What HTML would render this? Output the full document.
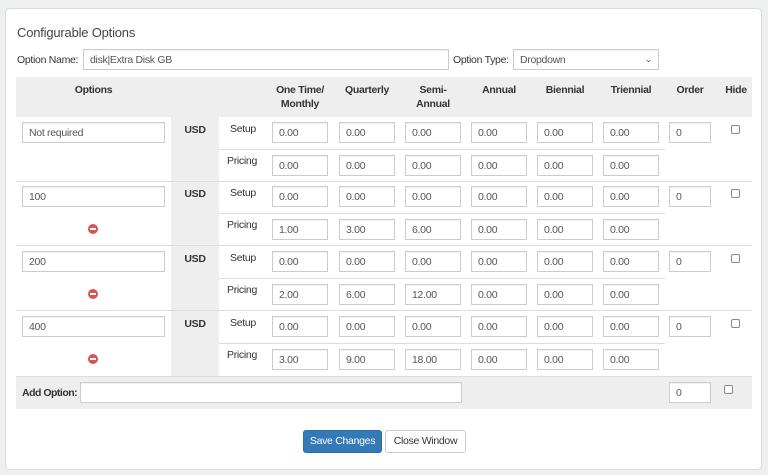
<!DOCTYPE html>
<html><head><meta charset="utf-8"><style>
*{box-sizing:border-box;margin:0;padding:0}
body{width:768px;height:475px;background:#eef0f0;font-family:"Liberation Sans",sans-serif;font-size:10.5px;letter-spacing:-0.3px;color:#333;position:relative;overflow:hidden}
.panel{position:absolute;left:5px;top:8px;width:757px;height:462px;background:#fff;border:1px solid #dcdcdc;border-radius:5px}
.a{position:absolute}
.in{position:absolute;height:21px;border:1px solid #ccc;background:#fff;color:#555;padding:1px 0 0 6px;line-height:19px;font-size:10.5px;box-shadow:inset 0 1px 1px rgba(0,0,0,.06)}
.h{position:absolute;font-weight:bold;text-align:center;line-height:14px;color:#333}
.grey{background:#eee}
.cb{position:absolute;width:9px;height:9px;border:1px solid #888;border-radius:2px;background:#fff}
.minus{position:absolute;width:10px;height:10px;border-radius:50%;background:#d9534f;}
.minus:after{content:"";position:absolute;left:2px;top:4px;width:6px;height:2px;background:#fff}
.blk{position:absolute;left:16px;width:736px;height:65px;border-bottom:1px solid #ddd}
.lbl{position:absolute}
</style></head><body>
<div class="panel"></div>
<div class="a" style="left:17px;top:25px;font-size:13px;color:#444;letter-spacing:-0.2px">Configurable Options</div>
<div class="a" style="left:17px;top:54px">Option Name:</div>
<div class="in" style="left:83px;top:49px;width:366px">disk|Extra Disk GB</div>
<div class="a" style="left:453px;top:54px">Option Type:</div>
<div class="in" style="left:513px;top:49px;width:146px">Dropdown<span style="position:absolute;right:6px;top:0;font-size:9px">&#8964;</span></div>
<div class="a grey" style="left:16px;top:77px;width:736px;height:40px"></div>
<div class="h" style="left:16px;top:83px;width:155px">Options</div>
<div class="h" style="left:268px;top:83px;width:64px">One Time/<br>Monthly</div>
<div class="h" style="left:335px;top:83px;width:64px">Quarterly</div>
<div class="h" style="left:401px;top:83px;width:64px">Semi-<br>Annual</div>
<div class="h" style="left:467px;top:83px;width:64px">Annual</div>
<div class="h" style="left:533px;top:83px;width:64px">Biennial</div>
<div class="h" style="left:599px;top:83px;width:64px">Triennial</div>
<div class="h" style="left:669px;top:83px;width:42px">Order</div>
<div class="h" style="left:722px;top:83px;width:28px">Hide</div>

<div class="a grey" style="left:171px;top:117px;width:48px;height:259px"></div>

<div class="blk" style="top:117px">
<div class="a" style="left:203px;top:32px;width:446px;border-top:1px solid #ddd"></div>
<div class="in" style="left:6px;top:5px;width:143px">Not required</div>
<div class="h" style="left:155px;top:6px;width:48px">USD</div>
<div class="lbl" style="left:214px;top:6px">Setup</div>
<div class="lbl" style="left:211px;top:38px">Pricing</div>
<div class="in" style="left:256px;top:5px;width:56px">0.00</div><div class="in" style="left:323px;top:5px;width:56px">0.00</div><div class="in" style="left:389px;top:5px;width:56px">0.00</div><div class="in" style="left:455px;top:5px;width:56px">0.00</div><div class="in" style="left:521px;top:5px;width:56px">0.00</div><div class="in" style="left:587px;top:5px;width:56px">0.00</div>
<div class="in" style="left:256px;top:38px;width:56px">0.00</div><div class="in" style="left:323px;top:38px;width:56px">0.00</div><div class="in" style="left:389px;top:38px;width:56px">0.00</div><div class="in" style="left:455px;top:38px;width:56px">0.00</div><div class="in" style="left:521px;top:38px;width:56px">0.00</div><div class="in" style="left:587px;top:38px;width:56px">0.00</div>
<div class="in" style="left:653px;top:5px;width:42px">0</div>
<div class="cb" style="left:715px;top:8px"></div>
</div>

<div class="blk" style="top:181px">
<div class="a" style="left:203px;top:32px;width:446px;border-top:1px solid #ddd"></div>
<div class="in" style="left:6px;top:5px;width:143px">100</div>
<div class="minus" style="left:72px;top:43px"></div>
<div class="h" style="left:155px;top:6px;width:48px">USD</div>
<div class="lbl" style="left:214px;top:6px">Setup</div>
<div class="lbl" style="left:211px;top:38px">Pricing</div>
<div class="in" style="left:256px;top:5px;width:56px">0.00</div><div class="in" style="left:323px;top:5px;width:56px">0.00</div><div class="in" style="left:389px;top:5px;width:56px">0.00</div><div class="in" style="left:455px;top:5px;width:56px">0.00</div><div class="in" style="left:521px;top:5px;width:56px">0.00</div><div class="in" style="left:587px;top:5px;width:56px">0.00</div>
<div class="in" style="left:256px;top:38px;width:56px">1.00</div><div class="in" style="left:323px;top:38px;width:56px">3.00</div><div class="in" style="left:389px;top:38px;width:56px">6.00</div><div class="in" style="left:455px;top:38px;width:56px">0.00</div><div class="in" style="left:521px;top:38px;width:56px">0.00</div><div class="in" style="left:587px;top:38px;width:56px">0.00</div>
<div class="in" style="left:653px;top:5px;width:42px">0</div>
<div class="cb" style="left:715px;top:8px"></div>
</div>

<div class="blk" style="top:246px">
<div class="a" style="left:203px;top:32px;width:446px;border-top:1px solid #ddd"></div>
<div class="in" style="left:6px;top:5px;width:143px">200</div>
<div class="minus" style="left:72px;top:43px"></div>
<div class="h" style="left:155px;top:6px;width:48px">USD</div>
<div class="lbl" style="left:214px;top:6px">Setup</div>
<div class="lbl" style="left:211px;top:38px">Pricing</div>
<div class="in" style="left:256px;top:5px;width:56px">0.00</div><div class="in" style="left:323px;top:5px;width:56px">0.00</div><div class="in" style="left:389px;top:5px;width:56px">0.00</div><div class="in" style="left:455px;top:5px;width:56px">0.00</div><div class="in" style="left:521px;top:5px;width:56px">0.00</div><div class="in" style="left:587px;top:5px;width:56px">0.00</div>
<div class="in" style="left:256px;top:38px;width:56px">2.00</div><div class="in" style="left:323px;top:38px;width:56px">6.00</div><div class="in" style="left:389px;top:38px;width:56px">12.00</div><div class="in" style="left:455px;top:38px;width:56px">0.00</div><div class="in" style="left:521px;top:38px;width:56px">0.00</div><div class="in" style="left:587px;top:38px;width:56px">0.00</div>
<div class="in" style="left:653px;top:5px;width:42px">0</div>
<div class="cb" style="left:715px;top:8px"></div>
</div>

<div class="blk" style="top:311px;border-bottom:none">
<div class="a" style="left:203px;top:32px;width:446px;border-top:1px solid #ddd"></div>
<div class="in" style="left:6px;top:5px;width:143px">400</div>
<div class="minus" style="left:72px;top:43px"></div>
<div class="h" style="left:155px;top:6px;width:48px">USD</div>
<div class="lbl" style="left:214px;top:6px">Setup</div>
<div class="lbl" style="left:211px;top:38px">Pricing</div>
<div class="in" style="left:256px;top:5px;width:56px">0.00</div><div class="in" style="left:323px;top:5px;width:56px">0.00</div><div class="in" style="left:389px;top:5px;width:56px">0.00</div><div class="in" style="left:455px;top:5px;width:56px">0.00</div><div class="in" style="left:521px;top:5px;width:56px">0.00</div><div class="in" style="left:587px;top:5px;width:56px">0.00</div>
<div class="in" style="left:256px;top:38px;width:56px">3.00</div><div class="in" style="left:323px;top:38px;width:56px">9.00</div><div class="in" style="left:389px;top:38px;width:56px">18.00</div><div class="in" style="left:455px;top:38px;width:56px">0.00</div><div class="in" style="left:521px;top:38px;width:56px">0.00</div><div class="in" style="left:587px;top:38px;width:56px">0.00</div>
<div class="in" style="left:653px;top:5px;width:42px">0</div>
<div class="cb" style="left:715px;top:8px"></div>
</div>

<div class="a grey" style="left:16px;top:376px;width:736px;height:33px;border-top:1px solid #ddd"></div>
<div class="h" style="left:22px;top:386px;letter-spacing:-0.5px">Add Option:</div>
<div class="in" style="left:80px;top:382px;width:382px"></div>
<div class="in" style="left:669px;top:382px;width:42px">0</div>
<div class="cb" style="left:724px;top:385px"></div>

<div class="a" style="left:303px;top:430px;width:79px;height:23px;background:#337ab7;border:1px solid #2e6da4;border-radius:3px;color:#fff;text-align:center;line-height:21px">Save Changes</div>
<div class="a" style="left:385px;top:430px;width:81px;height:23px;background:#fff;border:1px solid #ccc;border-radius:3px;color:#333;text-align:center;line-height:21px">Close Window</div>
</body></html>
